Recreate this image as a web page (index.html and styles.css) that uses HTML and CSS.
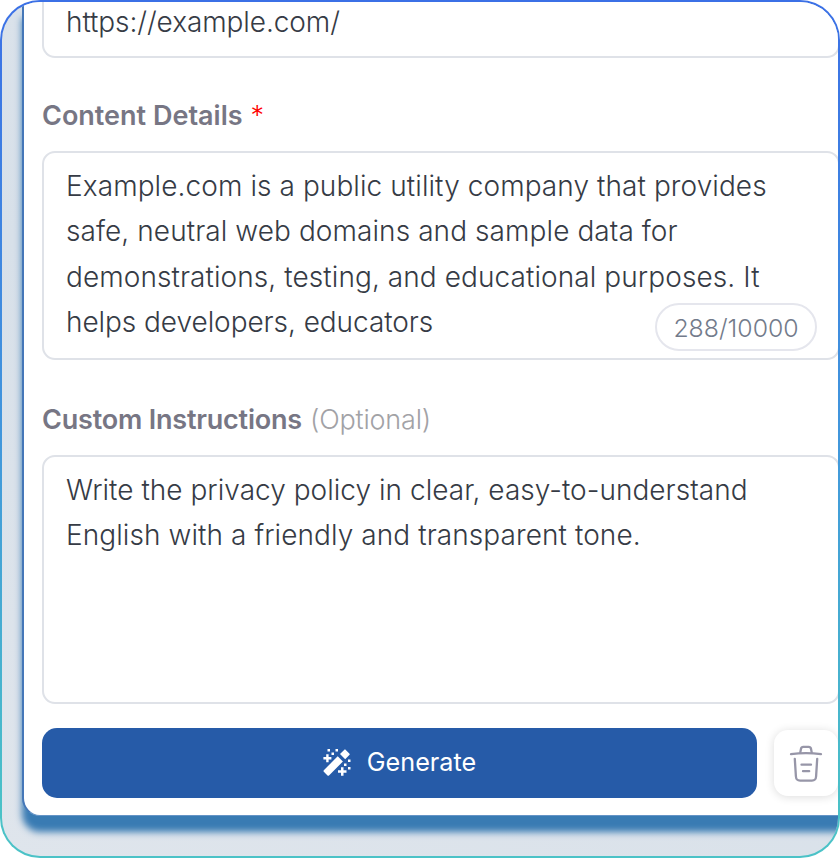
FILE: index.html
```html
<!DOCTYPE html>
<html lang="en">
<head>
  <meta charset="UTF-8">
  <meta name="viewport" content="width=device-width, initial-scale=1.0">
  <title>Privacy Policy Generator</title>
  <link rel="stylesheet" href="styles.css">
</head>
<body>
  <div class="frame">
    <div class="backdrop">
      <main class="panel">
        <div class="field url-field"><span class="line line-url">https://example.com/</span></div>

        <h2 class="label content-label"><span class="label-text">Content Details</span> <span class="required">*</span></h2>
        <div class="field details-field">
          <span class="line line-1">Example.com is a public utility company that provides</span>
          <span class="line line-2">safe, neutral web domains and sample data for</span>
          <span class="line line-3">demonstrations, testing, and educational purposes. It</span>
          <span class="line line-4">helps developers, educators</span>
          <span class="counter">288/10000</span>
        </div>

        <h2 class="label custom-label"><span class="label-text">Custom Instructions</span> <span class="optional">(Optional)</span></h2>
        <div class="field custom-field">
          <span class="line line-5">Write the privacy policy in clear, easy-to-understand</span>
          <span class="line line-6">English with a friendly and transparent tone.</span>
        </div>

        <div class="actions">
          <button class="generate" type="button">
            <svg class="wand" viewBox="0 0 28 28" fill="currentColor">
              <path d="M.8 22.200 14.700 8.300l5.200 5.200L6 27.400c-.5.5-1 .5-1.500 0L.8 23.700c-.4-.5-.4-1 0-1.500z"/>
              <path d="m17 6 4.100-4.100c.6-.6 1.100-.6 1.700 0l3.500 3.500c.6.6.6 1.100 0 1.700l-4.100 4.100z"/>
              <path d="M3.200 6.300h2.400v2.800h2.800v2.400H5.600v2.800H3.200v-2.800H.4V9.100h2.800zM18 19.300h2.500v3h3v2.500h-3v3H18v-3h-3v-2.500h3z"/>
              <path d="M4.500 1H7v2.500H4.500zM8.500 4.500H11V7H8.500zM12.500 1H15v2.500h-2.500zM25 11.500h2.500V14H25zM21 15.500h2.500V18H21zM25 19h2.500v2.500H25z"/>
            </svg>
            <span class="generate-text">Generate</span>
          </button>
          <button class="trash" type="button" aria-label="Clear">
            <svg class="bin" viewBox="0 0 34 38" fill="none" stroke="currentColor" stroke-width="2.300" stroke-linecap="round" stroke-linejoin="round">
              <path d="M2 9.200C12 7.700 22 7.700 32 9.200"/>
              <path d="m11.300 7.400.7-3.600c.3-1.500.8-1.900 2.300-1.900h5.400c1.500 0 2 .5 2.300 1.900l.7 3.600"/>
              <path d="m5.800 13.800 1.100 17.500c.2 3.200 1 4.300 4.200 4.300h11.800c3.200 0 4-1.100 4.200-4.300l1.100-17.500"/>
              <path d="M12.500 19.700h9.500M14 26.200h6.200"/>
            </svg>
          </button>
        </div>
      </main>
    </div>
  </div>
</body>
</html>
```

FILE: styles.css
```css
* {
  box-sizing: border-box;
}
body {
  margin: 0;
  background: #fff;
  font-family: Inter, "Liberation Sans", sans-serif;
  color: #363b45;
}
.frame {
  width: 840px;
  height: 858px;
  padding: 2px;
  border-radius: 40px;
  background: linear-gradient(180deg, #3b70e6, #4196dc 50%, #4bc2c7 95%);
  overflow: hidden;
}
.backdrop {
  height: 854px;
  padding-left: 20px;
  border-radius: 38px;
  background: linear-gradient(25deg, #dfe5ec, #d7e0e9 50%, #dfe5ec);
  overflow: hidden;
}
.panel {
  width: 840px;
  height: 814px;
  padding-left: 18px;
  border-left: 2px solid #4577b8;
  border-bottom: 1px solid #6594c6;
  border-bottom-left-radius: 18px;
  background: #fff;
  box-shadow: 0 16px 7px #397bb3;
}
.field {
  position: relative;
  width: 798px;
  padding-left: 22px;
  border: 2px solid #dfe2e8;
  border-radius: 13px;
}
.line {
  display: block;
  height: 45.3px;
  line-height: 45.3px;
  font-size: 28px;
  font-weight: 300;
  letter-spacing: 0.08px;
  white-space: nowrap;
}
.url-field {
  height: 56px;
  border-top: none;
  border-top-left-radius: 0;
  border-top-right-radius: 0;
}
.line-url {
  line-height: 40px;
  letter-spacing: -0.08px;
}
.line-4 {
  letter-spacing: -0.06px;
}
.line-5 {
  letter-spacing: 0.03px;
}
.details-field {
  height: 209px;
  padding-top: 11px;
}
.custom-field {
  height: 249px;
  padding-top: 11px;
}
.counter {
  position: absolute;
  right: 21px;
  bottom: 7px;
  width: 162px;
  height: 48px;
  border: 2px solid #e5e6ed;
  border-radius: 24px;
  background: #fff;
  color: #737b8b;
  font-size: 24.8px;
  font-weight: 300;
  line-height: 47px;
  text-align: center;
}
.label {
  display: flex;
  gap: 8px;
  margin: 0;
  color: #777684;
  font-size: 27px;
  font-weight: 600;
  line-height: 36px;
  white-space: nowrap;
}
.content-label {
  padding: 40px 0 17px;
}
.custom-label {
  padding: 42px 0 17px;
}
.custom-label .label-text {
  letter-spacing: -0.2px;
}
.required {
  color: #f00;
  font-weight: 300;
}
.optional {
  color: #a2a2a6;
  font-weight: 300;
  letter-spacing: -0.2px;
}
.actions {
  display: flex;
  align-items: center;
  gap: 17px;
  padding-top: 24px;
}
button {
  display: flex;
  align-items: center;
  justify-content: center;
  padding: 0;
  border: none;
  font-family: inherit;
}
.generate {
  width: 715px;
  height: 70px;
  gap: 16px;
  padding-bottom: 3px;
  border-radius: 15px;
  background: #265ba8;
  color: #fff;
  font-size: 25.2px;
}
.wand {
  width: 28px;
  height: 28px;
}
.trash {
  width: 64px;
  height: 66px;
  padding-top: 1px;
  border-radius: 14px;
  background: #fff;
  box-shadow: 0 1px 10px rgba(0, 0, 0, 0.14);
  color: #9796a8;
}
.bin {
  width: 34px;
  height: 38px;
}
```
